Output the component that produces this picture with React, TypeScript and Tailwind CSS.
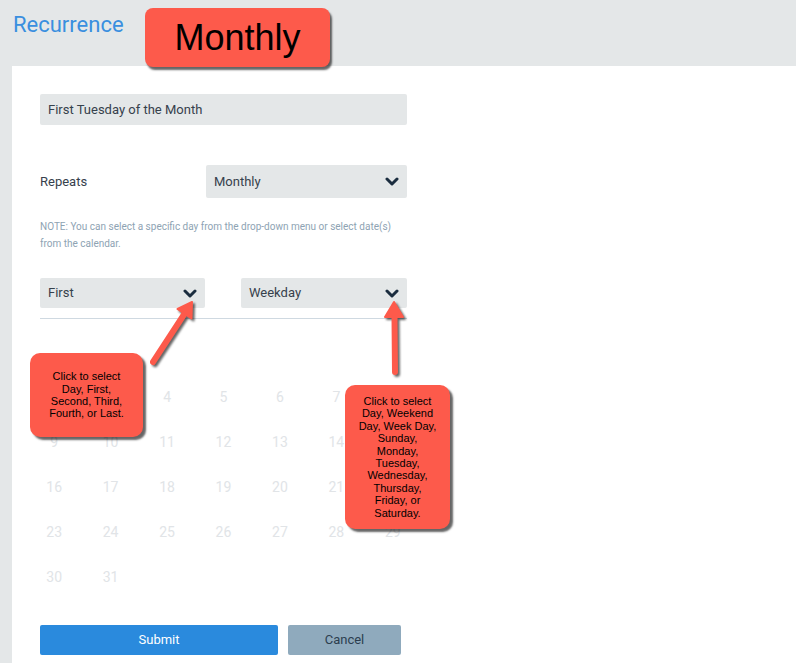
import React from "react";

const RED = "bg-[#fd5a4b]";

const Chevron = () => (
  <svg width="14" height="9" viewBox="0 0 14 9" className="shrink-0">
    <polyline
      points="2,2 7,7 12,2"
      fill="none"
      stroke="#1b2d3f"
      strokeWidth="3"
      strokeLinecap="round"
      strokeLinejoin="round"
    />
  </svg>
);

const Select = ({ label, className }: { label: string; className: string }) => (
  <div
    className={`flex items-center justify-between bg-[#e4e7e8] rounded-[2px] pl-[8px] pr-[8px] text-[13px] text-[#36414c] ${className}`}
  >
    <span>{label}</span>
    <Chevron />
  </div>
);

// calendar: the first row is empty here (the 1st sits under the arrow)
const days: (number | null)[] = [null, null, null, null, null, null, null];
for (let d = 2; d <= 31; d++) days.push(d);

const Callout = ({ lines, className }: { lines: string[]; className: string }) => (
  <div
    className={`absolute ${RED} rounded-[10px] shadow-[3px_3px_2px_rgba(0,0,0,0.6)] flex flex-col items-center justify-center text-center text-black text-[11px] leading-[12.4px] font-['Liberation_Sans',Arial,sans-serif] ${className}`}
  >
    {lines.map((l) => (
      <span key={l}>{l}</span>
    ))}
  </div>
);

export default function App() {
  return (
    <div className="relative min-h-[663px] bg-[#e4e7e8] font-['Roboto',sans-serif] overflow-hidden">
      <header className="h-[66px] pl-[13px] pt-[11px]">
        <h1 className="text-[22px] leading-[28px] text-[#3a8fdf]">Recurrence</h1>
      </header>

      <main className="ml-[12px] bg-white min-h-[597px] pl-[28px] pt-[28px]">
        <div className="w-[367px] flex flex-col">
          <div className="h-[31px] bg-[#e4e7e8] rounded-[2px] flex items-center pl-[8px] text-[13px] text-[#36414c]">
            First Tuesday of the Month
          </div>

          <div className="mt-[40px] flex items-center">
            <span className="w-[166px] text-[13px] text-[#36414c]">Repeats</span>
            <Select label="Monthly" className="h-[33px] flex-1" />
          </div>

          <p className="mt-[20px] text-[10px] leading-[17px] text-[#8ea3b3]">
            NOTE: You can select a specific day from the drop-down menu or select date(s) from the calendar.
          </p>

          <div className="mt-[26px] flex justify-between">
            <Select label="First" className="h-[30px] w-[165px]" />
            <Select label="Weekday" className="h-[30px] w-[166px]" />
          </div>

          <div className="mt-[10px] border-t border-[#cfd9e1]" />

          <div className="mt-[11px] -ml-[14px] w-[395px] grid grid-cols-7">
            {days.map((d, i) => (
              <div
                key={i}
                className="h-[45px] flex items-center justify-center text-[14px] text-[#e1e4e7]"
              >
                {d ?? ""}
              </div>
            ))}
          </div>

          <div className="mt-[25px] flex gap-[10px]">
            <button className="h-[30px] w-[238px] rounded-[2px] bg-[#2a8add] text-white text-[13px]">
              Submit
            </button>
            <button className="h-[30px] w-[113px] rounded-[2px] bg-[#8faabd] text-[#2c3e4f] text-[13px]">
              Cancel
            </button>
          </div>
        </div>
      </main>

      {/* annotation overlays */}
      <div
        className={`absolute left-[145px] top-[8px] w-[185px] h-[59px] ${RED} rounded-[8px] shadow-[2px_3px_2px_rgba(0,0,0,0.6)] flex items-center justify-center text-black text-[36px] font-['Liberation_Sans',Arial,sans-serif]`}
      >
        Monthly
      </div>

      <svg
        width="796"
        height="663"
        className="absolute left-0 top-0 pointer-events-none drop-shadow-[2px_2px_1px_rgba(0,0,0,0.6)]"
      >
        <line x1="153" y1="362" x2="185" y2="313" stroke="#fd5a4b" strokeWidth="6" strokeLinecap="round" />
        <polygon points="192,302 191.5,318.5 177.5,309" fill="#fd5a4b" stroke="#fd5a4b" strokeWidth="2" strokeLinejoin="round" />
        <line x1="395" y1="372" x2="394.5" y2="315" stroke="#fd5a4b" strokeWidth="6" strokeLinecap="round" />
        <polygon points="394,302 385,317 403,317" fill="#fd5a4b" stroke="#fd5a4b" strokeWidth="2" strokeLinejoin="round" />
      </svg>

      <Callout
        className="left-[30px] top-[353px] w-[113px] h-[84px]"
        lines={["Click to select", "Day, First,", "Second, Third,", "Fourth, or Last."]}
      />
      <Callout
        className="left-[345px] top-[385px] w-[105px] h-[144px]"
        lines={[
          "Click to select",
          "Day, Weekend",
          "Day, Week Day,",
          "Sunday,",
          "Monday,",
          "Tuesday,",
          "Wednesday,",
          "Thursday,",
          "Friday, or",
          "Saturday.",
        ]}
      />
    </div>
  );
}
